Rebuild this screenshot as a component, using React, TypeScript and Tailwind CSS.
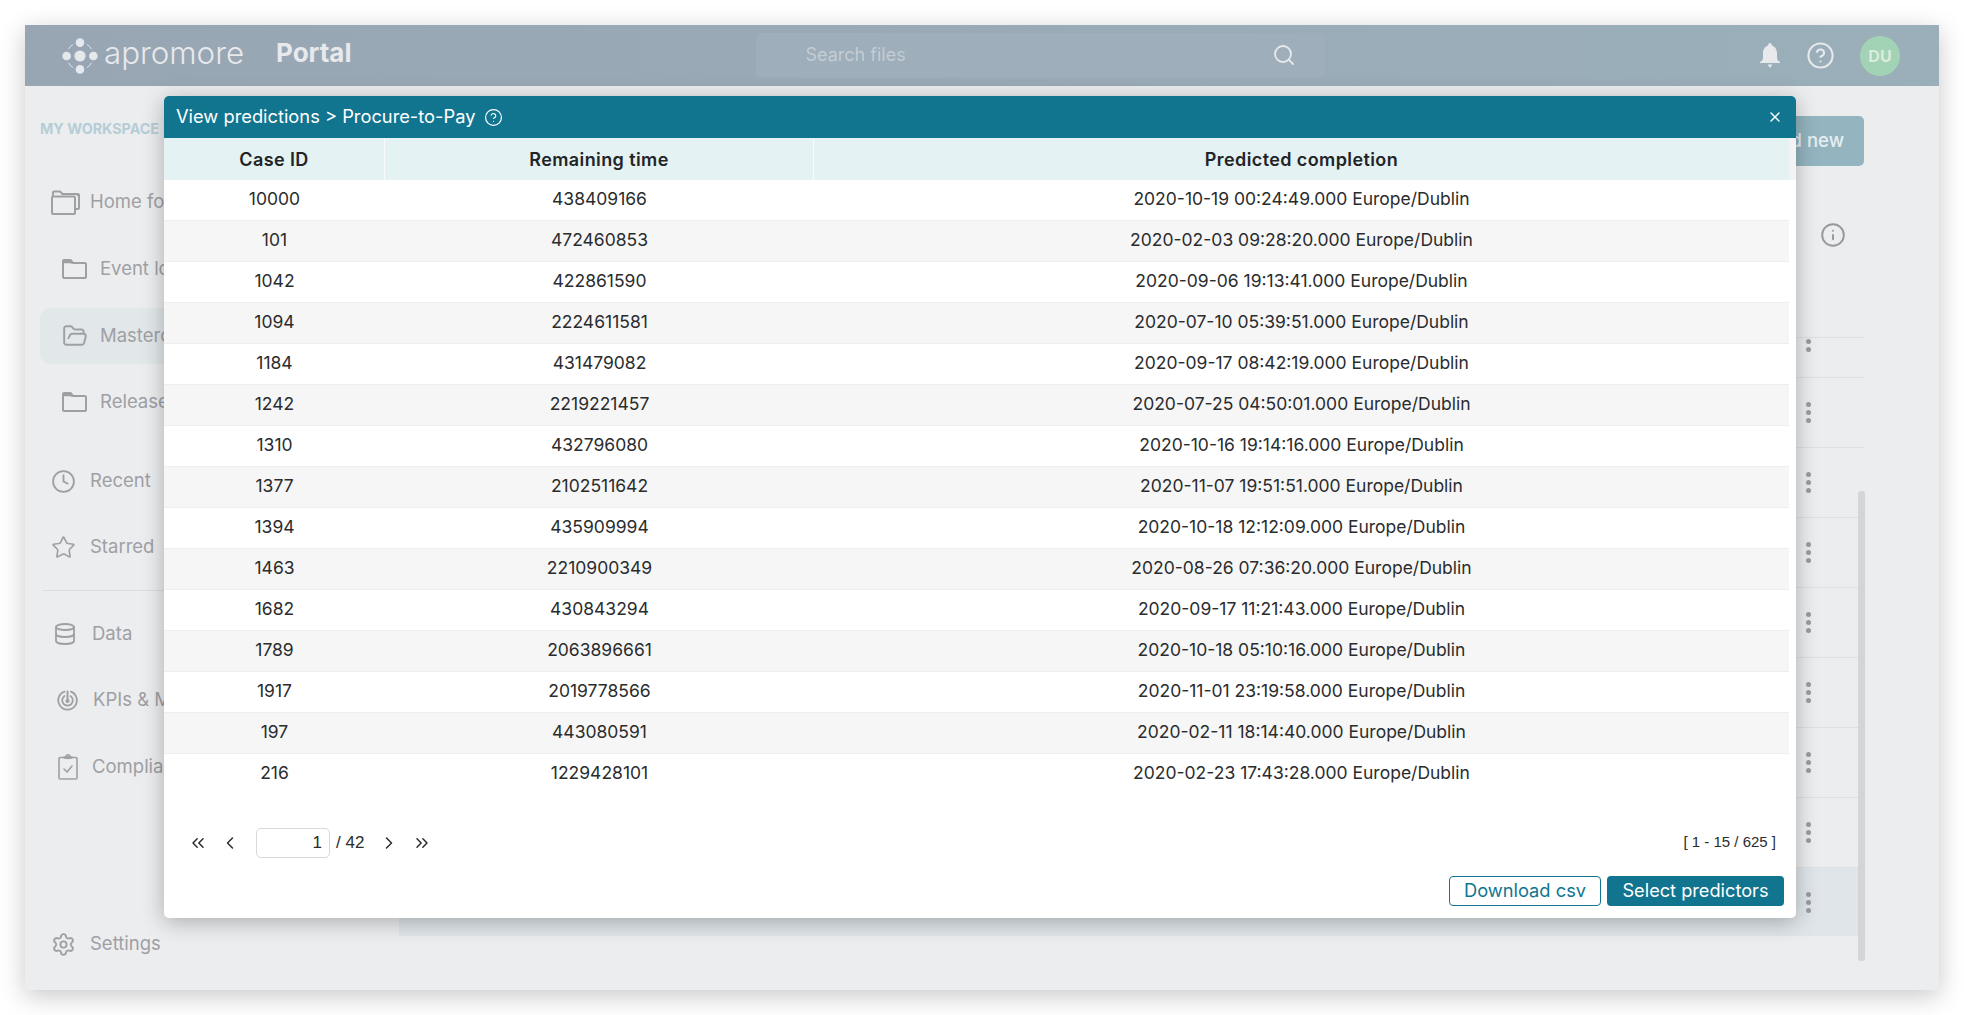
import {
  ChevronLeft,
  ChevronRight,
  ChevronsLeft,
  ChevronsRight,
  CircleHelp,
  Clock,
  Database,
  FolderOpen,
  Info,
  Search,
  Settings,
  Star,
  X,
} from 'lucide-react';
import type { ReactNode } from 'react';

const rows = [
  ['10000', '438409166', '2020-10-19 00:24:49.000 Europe/Dublin'],
  ['101', '472460853', '2020-02-03 09:28:20.000 Europe/Dublin'],
  ['1042', '422861590', '2020-09-06 19:13:41.000 Europe/Dublin'],
  ['1094', '2224611581', '2020-07-10 05:39:51.000 Europe/Dublin'],
  ['1184', '431479082', '2020-09-17 08:42:19.000 Europe/Dublin'],
  ['1242', '2219221457', '2020-07-25 04:50:01.000 Europe/Dublin'],
  ['1310', '432796080', '2020-10-16 19:14:16.000 Europe/Dublin'],
  ['1377', '2102511642', '2020-11-07 19:51:51.000 Europe/Dublin'],
  ['1394', '435909994', '2020-10-18 12:12:09.000 Europe/Dublin'],
  ['1463', '2210900349', '2020-08-26 07:36:20.000 Europe/Dublin'],
  ['1682', '430843294', '2020-09-17 11:21:43.000 Europe/Dublin'],
  ['1789', '2063896661', '2020-10-18 05:10:16.000 Europe/Dublin'],
  ['1917', '2019778566', '2020-11-01 23:19:58.000 Europe/Dublin'],
  ['197', '443080591', '2020-02-11 18:14:40.000 Europe/Dublin'],
  ['216', '1229428101', '2020-02-23 17:43:28.000 Europe/Dublin'],
];

function Logo() {
  return (
    <svg width="36" height="36" viewBox="0 0 36 36" className="text-[#e6e9ec]" fill="currentColor">
      <circle cx="18" cy="18" r="5.6" />
      <circle cx="18" cy="4.6" r="4.3" />
      <circle cx="18" cy="31.4" r="4.3" />
      <circle cx="4.6" cy="18" r="4.3" />
      <circle cx="31.4" cy="18" r="4.3" />
      <g fill="none" stroke="currentColor" strokeWidth="1">
        <path d="M6.5 11 A13.4 13.4 0 0 1 11 6.5" />
        <path d="M25 6.5 A13.4 13.4 0 0 1 29.5 11" />
        <path d="M6.5 25 A13.4 13.4 0 0 0 11 29.5" />
        <path d="M25 29.5 A13.4 13.4 0 0 0 29.5 25" />
      </g>
    </svg>
  );
}

function HomeFolderIcon() {
  return (
    <svg width="29" height="25" viewBox="0 0 29 25" fill="none" stroke="currentColor" strokeWidth="2" strokeLinejoin="round">
      <path d="M1 7.500a1 1 0 0 1 1-1h21a1 1 0 0 1 1 1V23a1 1 0 0 1-1 1H2a1 1 0 0 1-1-1z" />
      <path d="M2 6V2.500a1 1 0 0 1 1-1h6l2.500 2.500H25a2 2 0 0 1 2 2" />
      <path d="M25 4h2a1 1 0 0 1 1 1v13a1 1 0 0 1-1 1h-3" />
    </svg>
  );
}

function FolderIcon() {
  return (
    <svg width="25" height="20" viewBox="0 0 25 20" fill="none" stroke="currentColor" strokeWidth="2" strokeLinejoin="round">
      <path d="M1 2a1 1 0 0 1 1-1h6.500l2.500 3h12a1 1 0 0 1 1 1v13a1 1 0 0 1-1 1H2a1 1 0 0 1-1-1z" />
      <path d="M2 3h7l1 1" strokeWidth="2.6" />
    </svg>
  );
}

function KpiIcon() {
  return (
    <svg width="21" height="21" viewBox="0 0 21 21" fill="none" stroke="currentColor" strokeWidth="1.8" strokeLinecap="round">
      <path d="M7.500 1.600a9.300 9.300 0 1 0 6.400.1" />
      <path d="M7.500 6a5.300 5.300 0 1 0 6 0" />
      <path d="M10.500 1.500v8.500" strokeWidth="2" />
      <circle cx="10.500" cy="11" r="1.200" fill="currentColor" />
    </svg>
  );
}

function ClipboardIcon() {
  return (
    <svg width="20" height="26" viewBox="0 0 20 26" fill="none" stroke="currentColor" strokeWidth="1.6" strokeLinejoin="round" strokeLinecap="round">
      <rect x="1" y="3.500" width="18" height="21.500" rx="1" />
      <path d="M6.500 3.500h7" strokeWidth="2.4" />
      <circle cx="10" cy="2.600" r="1.800" />
      <path d="M6 15l3 3 5-6" />
    </svg>
  );
}

function BellIcon() {
  return (
    <svg width="20" height="25" viewBox="0 0 20 25" fill="currentColor">
      <path d="M10 0a1.800 1.800 0 0 1 1.800 1.800v.8C15.500 3.600 17 7 17 10.500V15c0 1.500 1.200 3 3 4v1H0v-1c1.800-1 3-2.500 3-4v-4.500C3 7 4.500 3.600 8.200 2.600v-.8A1.800 1.800 0 0 1 10 0zM7.500 21.500h5L10 25z" />
    </svg>
  );
}

function NavItem({ icon, label, className }: { icon: ReactNode; label: string; className: string }) {
  return (
    <div className={`flex items-center whitespace-nowrap text-[#9ea0a4] text-[18.5px] ${className}`}>
      {icon}
      <span>{label}</span>
    </div>
  );
}

function Kebab({ className }: { className?: string }) {
  return (
    <div className={`flex flex-col gap-[3px] ${className ?? ''}`}>
      <span className="w-[5px] h-[5px] rounded-full bg-[#9a9b9e]" />
      <span className="w-[5px] h-[5px] rounded-full bg-[#9a9b9e]" />
      <span className="w-[5px] h-[5px] rounded-full bg-[#9a9b9e]" />
    </div>
  );
}

function Sidebar() {
  return (
    <aside className="w-[374px] shrink-0 flex flex-col pt-[34px] pl-[15px]">
      <div className="text-[14.3px] font-bold text-[#b5cdd6] leading-[18px]">MY WORKSPACE</div>
      <NavItem className="mt-[49px] pl-[11px] gap-[10px] h-[30px]" label="Home folder" icon={<HomeFolderIcon />} />
      <NavItem className="mt-[37px] pl-[22px] gap-[13px] h-[30px]" label="Event logs" icon={<FolderIcon />} />
      <NavItem
        className="mt-[24px] pl-[22px] gap-[12px] h-[56px] bg-[#e2e7ea] rounded-[10px]"
        label="Masterclass"
        icon={<FolderOpen size={26} strokeWidth={1.8} />}
      />
      <NavItem className="mt-[23px] pl-[22px] gap-[13px] h-[30px]" label="Releases" icon={<FolderIcon />} />
      <NavItem className="mt-[49px] pl-[11px] gap-[14px] h-[30px]" label="Recent" icon={<Clock size={25} strokeWidth={1.8} />} />
      <NavItem className="mt-[36px] pl-[11px] gap-[14px] h-[30px]" label="Starred" icon={<Star size={25} strokeWidth={1.6} />} />
      <div className="mt-[28px] ml-[3px] h-px bg-[#dcdde0]" />
      <NavItem className="mt-[28px] pl-[13px] gap-[15px] h-[30px]" label="Data" icon={<Database size={24} strokeWidth={1.8} />} />
      <NavItem className="mt-[36px] pl-[17px] gap-[15px] h-[30px]" label="KPIs & Metrics" icon={<KpiIcon />} />
      <NavItem className="mt-[37px] pl-[18px] gap-[14px] h-[30px]" label="Compliance" icon={<ClipboardIcon />} />
      <NavItem className="mt-[147px] pl-[11px] gap-[14px] h-[30px]" label="Settings" icon={<Settings size={25} strokeWidth={1.8} />} />
    </aside>
  );
}

function BackgroundMain() {
  return (
    <main className="relative flex-1 pt-[30px] pr-[75px]">
      <div className="flex justify-end">
        <div className="h-[50px] w-[200px] rounded-[5px] bg-[#94b5c0] flex items-center justify-end pr-[20px] text-[18.5px] font-medium text-[#e6eef1]">
          Add new
        </div>
      </div>
      <div className="flex justify-end pr-[18px] mt-[56px] text-[#98999c]">
        <Info size={26} strokeWidth={1.8} />
      </div>
      <div className="mt-[89px] border-t border-[#dedfe2] h-[40px] overflow-hidden flex justify-end pr-[53px]">
        <Kebab className="-mt-[7px]" />
      </div>
      {[0, 1, 2, 3, 4, 5, 6].map((i) => (
        <div key={i} className="border-t border-[#dedfe2] h-[70px] flex items-center justify-end pr-[53px]">
          <Kebab />
        </div>
      ))}
      <div className="border-t border-[#dedfe2] h-[69px] bg-[#dfe5e9] flex items-center justify-end pr-[53px]">
        <Kebab />
      </div>
      <div className="absolute right-[74px] top-[405px] w-[7px] h-[470px] rounded-[3px] bg-[#d4d5d7]" />
    </main>
  );
}

function PredictionsModal() {
  return (
    <div className="absolute left-[164px] top-[96px] w-[1632px] h-[822px] bg-white rounded-[5px] shadow-[0_4px_22px_rgba(0,0,0,0.28)] flex flex-col overflow-hidden">
      <div className="h-[42px] bg-[#117590] flex items-center pl-[12px] pr-[13px] pb-[1px] text-white text-[18.3px]">
        <span>View predictions &gt; Procure-to-Pay</span>
        <CircleHelp size={19} strokeWidth={1.5} className="ml-[9px] mt-[2px]" />
        <X size={16} strokeWidth={2} className="ml-auto" />
      </div>
      <div className="h-[42px] bg-[#f3f3f3] pr-[7px]">
        <div className="h-full bg-[#e4f2f4] flex items-center font-semibold text-[#222426] text-[18px] tracking-[0.4px] text-center">
          <div className="w-[221px] h-full flex items-center justify-center border-r border-[#f7fbfc]">Case ID</div>
          <div className="w-[429px] h-full flex items-center justify-center border-r border-[#f7fbfc]">Remaining time</div>
          <div className="flex-1">Predicted completion</div>
        </div>
      </div>
      <div className="pr-[7px]">
        {rows.map((r, i) => (
          <div
            key={r[0]}
            className={`h-[41px] pb-[2px] flex items-center text-center text-[#2a2c2e] text-[17.5px] border-b border-[#eeeeee] last:border-b-0 ${
              i % 2 === 1 ? 'bg-[#f6f6f6]' : 'bg-white'
            }`}
          >
            <div className="w-[221px]">{r[0]}</div>
            <div className="w-[429px]">{r[1]}</div>
            <div className="flex-1">{r[2]}</div>
          </div>
        ))}
      </div>
      <div className="mt-[33px] h-[30px] flex items-center pl-[24px] pr-[20px] text-[#2a2c2e] font-['Liberation_Sans',sans-serif]">
        <ChevronsLeft size={20} strokeWidth={1.8} />
        <ChevronLeft size={20} strokeWidth={1.8} className="ml-[12px]" />
        <div className="ml-[16px] w-[74px] h-[30px] border border-[#d8d8d8] rounded-[5px] flex items-end justify-end pr-[7px] pb-[2px] text-[17px]">
          1
        </div>
        <span className="ml-[6px] text-[17px]">/ 42</span>
        <ChevronRight size={20} strokeWidth={1.8} className="ml-[15px]" />
        <ChevronsRight size={20} strokeWidth={1.8} className="ml-[13px]" />
        <span className="ml-auto mb-[2px] text-[15px]">[ 1 - 15 / 625 ]</span>
      </div>
      <div className="mt-[18px] flex justify-end gap-[6px] pr-[12px]">
        <button className="w-[152px] h-[30px] rounded-[4px] border border-[#117590] text-[#117590] text-[18.3px] flex items-center justify-center">
          Download csv
        </button>
        <button className="w-[177px] h-[30px] rounded-[4px] bg-[#117590] text-white text-[18.2px] flex items-center justify-center">
          Select predictors
        </button>
      </div>
    </div>
  );
}

export default function App() {
  return (
    <div className="relative w-[1964px] h-[1015px] bg-white p-[25px] overflow-hidden font-['Inter',sans-serif]">
      <div className="w-[1914px] h-[965px] bg-[#ecedef] shadow-[0_6px_24px_rgba(0,0,0,0.22)] flex flex-col">
        <header className="h-[61px] shrink-0 bg-gradient-to-r from-[#98a6b3] to-[#9aafb9] flex items-center pl-[37px] pr-[39px] text-[#e7e9ec]">
          <Logo />
          <span className="ml-[6px] mb-[3px] text-[31.300px] leading-none font-light">apromore</span>
          <span className="ml-[32px] mb-[5px] text-[26px] font-bold leading-none">Portal</span>
          <div className="ml-[404px] w-[569px] h-[45px] rounded-[5px] bg-[#9eaeba] flex items-center pl-[50px] pr-[29px] text-[#c3cdd4] text-[18px]">
            <span className="mb-[2px]">Search files</span>
            <Search size={24} strokeWidth={1.8} className="ml-auto mb-[2px] text-[#e8ebee]" />
          </div>
          <div className="ml-auto flex items-center">
            <BellIcon />
            <CircleHelp size={29} strokeWidth={1.7} className="ml-[26px]" />
            <div className="ml-[25px] w-[40px] h-[40px] rounded-full bg-[#a2d3b4] flex items-center justify-center text-[16px] font-bold text-[#dcecdf]">
              DU
            </div>
          </div>
        </header>
        <div className="flex flex-1 min-h-0">
          <Sidebar />
          <BackgroundMain />
        </div>
      </div>
      <PredictionsModal />
    </div>
  );
}
